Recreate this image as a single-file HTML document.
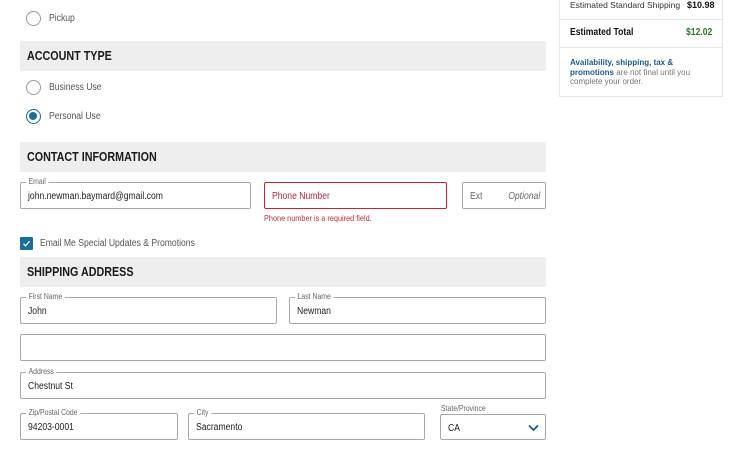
<!DOCTYPE html>
<html><head><meta charset="utf-8"><style>
*{box-sizing:border-box;margin:0;padding:0}
body{width:750px;height:456px;background:#fff;position:relative;overflow:hidden;font-family:"Liberation Sans",sans-serif;color:#333}
.a{position:absolute}
.c{display:inline-block;transform:scaleX(.86);transform-origin:0 50%;white-space:nowrap}
.radio{position:absolute;width:15px;height:15px;border:1px solid #999;border-radius:50%;background:#fff}
.radio.on{border:1.5px solid #1a6a92}
.radio.on::after{content:"";position:absolute;left:2px;top:2px;width:8px;height:8px;border-radius:50%;background:#1a6f9a}
.lbl{position:absolute;font-size:10px;color:#555;white-space:nowrap}
.band{position:absolute;left:20px;width:526px;height:30px;background:#eeeeee;font-weight:bold;font-size:12.5px;color:#1a1a1a;padding:8px 0 0 7px}
.f{position:absolute;border:1px solid #aaa;border-radius:2px;height:27px;font-size:10px;color:#222;padding:8px 0 0 7px;white-space:nowrap}
.f .l{position:absolute;top:-6px;left:5px;background:#fff;padding:0 3px;font-size:8px;color:#666;line-height:10px;transform:scaleX(.86);transform-origin:0 50%}
</style></head><body>
<div class="radio" style="left:26px;top:11px"></div><div class="lbl" style="left:49px;top:13px"><span class="c">Pickup</span></div>
<div class="band" style="top:41px"><span class="c">ACCOUNT TYPE</span></div>
<div class="radio" style="left:26px;top:80px"></div><div class="lbl" style="left:49px;top:82px"><span class="c">Business Use</span></div>
<div class="radio on" style="left:26px;top:109px"></div><div class="lbl" style="left:49px;top:111px"><span class="c">Personal Use</span></div>
<div class="band" style="top:142px"><span class="c">CONTACT INFORMATION</span></div>
<div class="f" style="left:20px;top:182px;width:231px"><span class="l">Email</span><span class="c">john.newman.baymard@gmail.com</span></div>
<div class="f" style="left:264px;top:182px;width:183px;border:1.5px solid #c5262e;color:#b02a30"><span class="c">Phone Number</span></div>
<div class="a" style="left:264px;top:213px;font-size:8.5px;color:#c0303a"><span class="c">Phone number is a required field.</span></div>
<div class="f" style="left:462px;top:182px;width:84px;color:#666"><span class="c">Ext</span><span style="position:absolute;right:5px;font-style:italic"><span class="c" style="transform-origin:100% 50%">Optional</span></span></div>
<div class="a" style="left:20px;top:237px;width:13px;height:13px;background:#1a6f9a;border-radius:1px"><svg width="13" height="13"><path d="M3.5 6.8l2 2 4-4.5" stroke="#fff" stroke-width="1.3" fill="none"/></svg></div>
<div class="lbl" style="left:40px;top:238px"><span class="c">Email Me Special Updates &amp; Promotions</span></div>
<div class="band" style="top:257px"><span class="c">SHIPPING ADDRESS</span></div>
<div class="f" style="left:20px;top:297px;width:257px"><span class="l">First Name</span><span class="c">John</span></div>
<div class="f" style="left:289px;top:297px;width:257px"><span class="l">Last Name</span><span class="c">Newman</span></div>
<div class="f" style="left:20px;top:334px;width:526px"></div>
<div class="f" style="left:20px;top:372px;width:526px"><span class="l">Address</span><span class="c">Chestnut St</span></div>
<div class="f" style="left:20px;top:413px;width:158px"><span class="l">Zip/Postal Code</span><span class="c">94203-0001</span></div>
<div class="f" style="left:188px;top:413px;width:237px"><span class="l">City</span><span class="c">Sacramento</span></div>
<div class="a" style="left:441px;top:404px;font-size:8px;color:#666"><span class="c">State/Province</span></div>
<div class="f" style="left:440px;top:414px;width:106px;height:26px"><span class="c">CA</span><svg class="a" style="right:6px;top:9px" width="11" height="8"><path d="M1 1.5l4.5 4.5 4.5-4.5" stroke="#1a5a80" stroke-width="1.8" fill="none"/></svg></div>
<div class="a" style="left:559px;top:-2px;width:164px;height:99px;border:1px solid #e6e6e6;border-top:none"></div>
<div class="a" style="left:570px;top:0;font-size:8.5px;color:#333">Estimated Standard Shipping</div>
<div class="a" style="left:687px;top:0;font-size:9px;font-weight:bold;color:#111">$10.98</div>
<div class="a" style="left:560px;top:19px;width:162px;height:1px;background:#e6e6e6"></div>
<div class="a" style="left:570px;top:27px;font-size:10px;font-weight:bold;color:#111"><span class="c">Estimated Total</span></div>
<div class="a" style="left:686px;top:27px;font-size:10px;font-weight:bold;color:#2a7a2a"><span class="c">$12.02</span></div>
<div class="a" style="left:560px;top:47px;width:162px;height:1px;background:#e6e6e6"></div>
<div class="a" style="left:570px;top:58px;width:145px;font-size:8px;line-height:9.6px;color:#777"><b style="color:#1e5a8a">Availability, shipping, tax &amp; promotions</b> are not final until you complete your order.</div>
</body></html>
